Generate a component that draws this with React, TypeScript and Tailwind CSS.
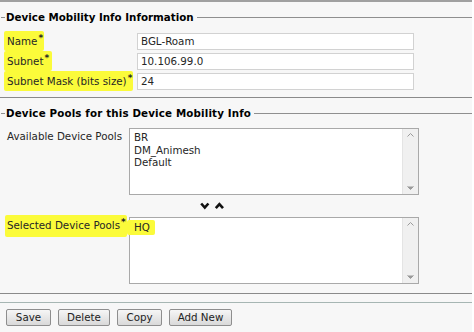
import React from "react";

const Star = () => (
  <span className="relative -top-[4px] ml-[1px] text-[9px] font-bold leading-none">*</span>
);

const Legend = ({ children }: { children: React.ReactNode }) => (
  <div className="flex items-center h-[12px]">
    <div className="ml-[1px] w-[4px] h-px bg-[#8f8f8f]" />
    <span className="px-[1px] font-bold text-black leading-none whitespace-nowrap">{children}</span>
    <div className="flex-1 h-px bg-[#8f8f8f] ml-[2px]" />
  </div>
);

const Field = ({ label, value, pr }: { label: string; value: string; pr: string }) => (
  <div className="flex items-center h-[20px]">
    <div className="w-[137px] pl-[4px]">
      <span className={`inline-block bg-[#fbfb3a] pl-[3px] ${pr} py-[4px] leading-[12px] rounded-[2px] whitespace-nowrap`}>
        {label}
        <Star />
      </span>
    </div>
    <div className="w-[277px] h-[17px] border border-[#d2d2d2] bg-white pl-[3px] leading-[15px]">{value}</div>
  </div>
);

const ScrollArrow = ({ up }: { up?: boolean }) => (
  <svg width="7" height="4" viewBox="0 0 7 4">
    <path d={up ? "M0.5 3.5 L3.5 0.5 L6.5 3.5" : "M0.5 0.5 L3.5 3.5 L6.5 0.5"} fill={up ? "none" : "#9a9a9a"} stroke="#9a9a9a" strokeWidth="1" />
  </svg>
);

const Listbox = ({ children }: { children: React.ReactNode }) => (
  <div className="flex w-[290px] h-[67px] border border-[#a9a9a9] bg-white">
    <div className="flex-1 pl-[4px] pt-[2px] leading-[12.5px]">{children}</div>
    <div className="w-[16px] bg-[#f0f0f0] border-l border-[#e4e4e4] flex flex-col items-center justify-between py-[4px]">
      <ScrollArrow up />
      <ScrollArrow />
    </div>
  </div>
);

const buttons = [
  { label: "Save", w: "w-[45px]" },
  { label: "Delete", w: "w-[52px]" },
  { label: "Copy", w: "w-[45px]" },
  { label: "Add New", w: "w-[63px]" },
];

export default function App() {
  return (
    <div className="w-[472px] h-[332px] bg-[#f7f7f7] text-[10.3px] text-[#262626] font-['DejaVu_Sans','Verdana',sans-serif] border-t-2 border-[#a0a0a0]">
      {/* Device Mobility Info */}
      <div className="pt-[9px] pb-[6px]">
        <Legend>Device Mobility Info Information</Legend>
        <div className="mt-[8px]">
          <Field label="Name" value="BGL-Roam" pr="pr-[1px]" />
          <Field label="Subnet" value="10.106.99.0" pr="pr-[3px]" />
          <Field label="Subnet Mask (bits size)" value="24" pr="pr-[1px]" />
        </div>
      </div>

      {/* Device Pools */}
      <div className="border-t border-[#8a8a8a] pt-[9px] pb-[9px]">
        <Legend>
          <span className="tracking-[0.15px]">Device Pools for this Device Mobility Info</span>
        </Legend>
        <div className="flex mt-[9px]">
          <div className="w-[129px] pl-[7px] pt-[2px] leading-[12px]">Available Device Pools</div>
          <Listbox>
            <div>BR</div>
            <div>DM_Animesh</div>
            <div>Default</div>
          </Listbox>
        </div>
        <div className="h-[22px] flex items-center pl-[200px]">
          <svg width="25" height="8" viewBox="0 0 25 8">
            <path d="M1.2 1.5 L4.8 5.6 L8.4 1.5" fill="none" stroke="#111" strokeWidth="2.6" />
            <path d="M15.8 6.2 L19.4 2.1 L23 6.2" fill="none" stroke="#111" strokeWidth="2.6" />
          </svg>
        </div>
        <div className="flex">
          <div className="w-[129px] pl-[5px]">
            <span className="inline-block -mt-[2px] bg-[#fbfb3a] pl-[2px] pr-[1px] pt-[4px] pb-[6px] leading-[12px] rounded-[2px] whitespace-nowrap">
              Selected Device Pools
              <Star />
            </span>
          </div>
          <Listbox>
            <span className="relative inline-block -ml-[7px] pl-[7px] pr-[5px] py-[1px] bg-[#fbfb3a] rounded-[2px]">HQ</span>
          </Listbox>
        </div>
      </div>

      {/* Buttons */}
      <div className="border-t border-[#8a8a8a] pt-[8px]">
        <div className="border-t border-[#a6b6b3] pt-[6px] flex gap-[7px] pl-[6px]">
          {buttons.map((b) => (
            <button
              key={b.label}
              className={`${b.w} h-[17px] leading-[15px] border border-[#8e8e8e] rounded-[2px] bg-linear-to-b from-[#f6f6f6] to-[#d9d9d9] text-[#222]`}
            >
              {b.label}
            </button>
          ))}
        </div>
      </div>
    </div>
  );
}
